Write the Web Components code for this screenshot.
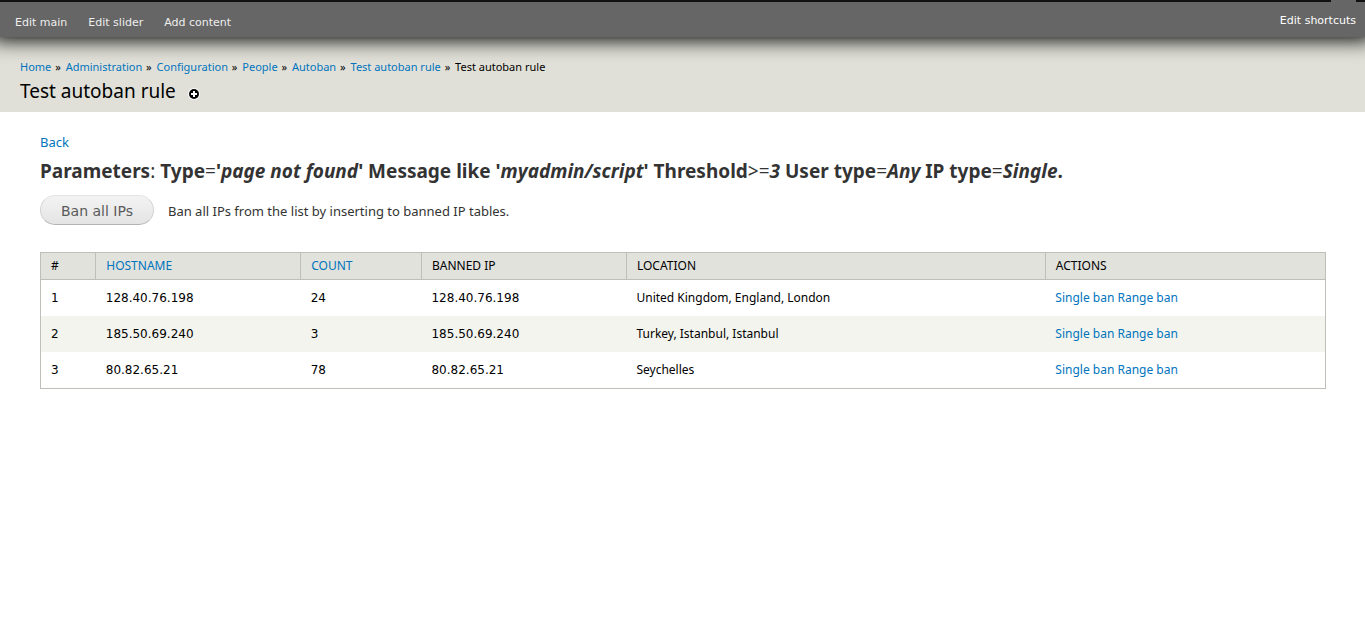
<!DOCTYPE html>
<html lang="en">
<head>
<meta charset="utf-8">
<meta name="viewport" content="width=device-width, initial-scale=1">
<title>Test autoban rule</title>
<style>
  body {
    margin: 0;
    overflow-x: clip;
    background: #fff;
    color: #000;
    font-family: "Noto Sans", "Open Sans", sans-serif;
    --link: #0074bd;
  }
</style>
</head>
<body>
<shortcut-bar>
  <a href="#main">Edit main</a>
  <a href="#slider">Edit slider</a>
  <a href="#content">Add content</a>
  <a slot="edit" href="#shortcuts">Edit shortcuts</a>
</shortcut-bar>
<page-branding heading="Test autoban rule" trail="Home|Administration|Configuration|People|Autoban|Test autoban rule"></page-branding>
<autoban-report>
  <ban-table></ban-table>
</autoban-report>

<script>
class ShortcutBar extends HTMLElement {
  constructor() {
    super();
    this.attachShadow({ mode: "open" });
  }

  /* the bar is wider than the page so that its shadow runs to the edges */
  static get styles() {
    return /* css */ `
      :host {
        display: block;
        position: relative;
        z-index: 1;
        margin: 0 -8px;
        font: 11px/16px "DejaVu Sans", sans-serif;
        background: #666;
        box-shadow: 0 3px 20px #000;
      }
      .edge {
        display: flex;
        justify-content: flex-end;
        height: 2px;
        padding-right: 17px;
        background: #111;
      }
      .tab {
        width: 25px;
        background: #666;
      }
      nav {
        display: flex;
        justify-content: space-between;
        padding: 11px 17px 6px 23px;
      }
      .links {
        display: flex;
        gap: 21px;
        padding-top: 2px;
      }
      ::slotted(a) {
        color: #eee;
        text-decoration: none;
      }
      ::slotted([slot="edit"]) {
        color: #fefefe;
      }
    `;
  }

  connectedCallback() {
    this.shadowRoot.innerHTML = /* html */ `
      <style>${ShortcutBar.styles}</style>
      <div class="edge"><div class="tab"></div></div>
      <nav>
        <div class="links"><slot></slot></div>
        <slot name="edit"></slot>
      </nav>
    `;
  }
}

class PageBranding extends HTMLElement {
  constructor() {
    super();
    this.attachShadow({ mode: "open" });
  }

  static get styles() {
    return /* css */ `
      :host {
        display: block;
        padding: 22px 20px 7px;
        background: #e0e0d8;
      }
      .trail {
        margin-bottom: 2px;
        font-size: 11px;
        line-height: 16px;
      }
      .trail span {
        margin: 0 2px 0 1px;
      }
      .trail a {
        color: var(--link);
        text-decoration: none;
      }
      .title {
        display: flex;
        align-items: center;
        gap: 12px;
      }
      h1 {
        margin: 0;
        font-size: 19px;
        font-weight: normal;
        line-height: 28px;
      }
      .add {
        display: flex;
        margin-top: 6px;
      }
    `;
  }

  connectedCallback() {
    const title = this.getAttribute("heading");
    const links = this.getAttribute("trail").split("|");
    this.shadowRoot.innerHTML = /* html */ `
      <style>${PageBranding.styles}</style>
      <nav class="trail" aria-label="Breadcrumb">
        ${links.map((text) => `<a href="#">${text}</a> <span>»</span> `).join("")}${title}
      </nav>
      <div class="title">
        <h1>${title}</h1>
        <a class="add" href="#add" aria-label="Add to shortcuts">
          <svg width="12" height="12" viewBox="0 0 12 12">
            <circle cx="6" cy="6" r="6" fill="#fff"/>
            <circle cx="6" cy="6" r="5" fill="#000"/>
            <path d="M5 3h2v2h2v2H7v2H5V7H3V5h2z" fill="#fff"/>
          </svg>
        </a>
      </div>
    `;
  }
}

class AutobanReport extends HTMLElement {
  constructor() {
    super();
    this.attachShadow({ mode: "open" });
  }

  static get styles() {
    return /* css */ `
      :host {
        display: block;
        padding: 20px 39px 20px 40px;
        color: #333;
        font-size: 13px;
        line-height: 20px;
      }
      .back {
        color: var(--link);
        text-decoration: none;
      }
      h3 {
        margin: 6px 0 11px;
        font-size: 19px;
        line-height: 26px;
      }
      h3 span { font-weight: normal; }
      .ban {
        display: flex;
        align-items: center;
        gap: 14px;
        margin-bottom: 27px;
      }
      button {
        height: 30px;
        padding: 2px 20px 0;
        border: 1px solid #e4e4e4;
        border-bottom-color: #b4b4b4;
        border-left-color: #d2d2d2;
        border-right-color: #d2d2d2;
        border-radius: 15px;
        background: linear-gradient(#f3f3f3, #e4e4e4);
        color: #5a5a5a;
        font: 14px/20px "DejaVu Sans", sans-serif;
      }
      #hint {
        padding-top: 2px;
      }
    `;
  }

  connectedCallback() {
    this.shadowRoot.innerHTML = /* html */ `
      <style>${AutobanReport.styles}</style>
      <a class="back" href="#back">Back</a>
      <h3>Parameters<span>:</span> Type<span>=</span>'<em>page not found</em>' Message like '<em>myadmin/script</em>' Threshold<span>&gt;=</span><em>3</em> User type<span>=</span><em>Any</em> IP type<span>=</span><em>Single</em>.</h3>
      <div class="ban">
        <button type="button" aria-describedby="hint">Ban all IPs</button>
        <span id="hint">Ban all IPs from the list by inserting to banned IP tables.</span>
      </div>
      <slot></slot>
    `;
  }
}

class BanTable extends HTMLElement {
  constructor() {
    super();
    this.attachShadow({ mode: "open" });
    this.rows = [
      ["128.40.76.198", 24, "United Kingdom, England, London"],
      ["185.50.69.240", 3, "Turkey, Istanbul, Istanbul"],
      ["80.82.65.21", 78, "Seychelles"],
    ];
  }

  static get styles() {
    return /* css */ `
      :host {
        display: block;
        color: #000;
        font-size: 12px;
        line-height: 18px;
      }
      table {
        width: 100%;
        table-layout: fixed;
        border: 1px solid #bebfb9;
        border-collapse: collapse;
      }
      th, td { box-sizing: border-box; }
      .num { width: 4.3%; }
      .host, .banned { width: 15.95%; }
      .count { width: 9.4%; }
      .place { width: 32.6%; }
      th {
        padding: 4px 10px;
        border: 1px solid #bebfb9;
        background: #e1e2dc;
        font-weight: normal;
        text-align: left;
        text-transform: uppercase;
      }
      td { padding: 9px 10px; }
      .digits { font-family: "DejaVu Sans", sans-serif; }
      tbody tr:nth-child(even) { background: #f3f4ee; }
      a {
        color: var(--link);
        text-decoration: none;
      }
    `;
  }

  connectedCallback() {
    this.shadowRoot.innerHTML = /* html */ `
      <style>${BanTable.styles}</style>
      <table>
        <thead>
          <tr>
            <th class="num">#</th>
            <th class="host"><a href="#hostname">Hostname</a></th>
            <th class="count"><a href="#count">Count</a></th>
            <th class="banned">Banned IP</th>
            <th class="place">Location</th>
            <th>Actions</th>
          </tr>
        </thead>
        <tbody>
          ${this.rows.map(([ip, count, place], i) => `
            <tr>
              <td class="digits">${i + 1}</td>
              <td class="digits">${ip}</td>
              <td class="digits">${count}</td>
              <td class="digits">${ip}</td>
              <td>${place}</td>
              <td><a href="#single">Single ban</a> <a href="#range">Range ban</a></td>
            </tr>`).join("")}
        </tbody>
      </table>
    `;
  }
}

customElements.define("shortcut-bar", ShortcutBar);
customElements.define("page-branding", PageBranding);
customElements.define("autoban-report", AutobanReport);
customElements.define("ban-table", BanTable);
</script>
</body>
</html>
